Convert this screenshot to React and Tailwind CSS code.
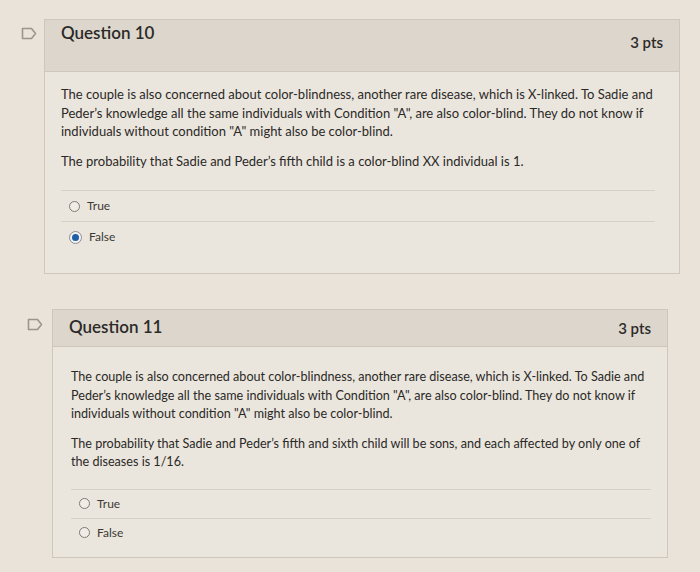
import React from 'react';

function Flag() {
  return (
    <svg width="16" height="13" viewBox="0 0 16 13" className="shrink-0">
      <path
        d="M1.5 1.5 H10.5 L14.5 6.5 L10.5 11.5 H1.5 Z"
        fill="none"
        stroke="#9a968f"
        strokeWidth="1.6"
        strokeLinejoin="round"
      />
    </svg>
  );
}

function Radio({ checked }) {
  if (checked) {
    return (
      <span className="w-[13px] h-[13px] rounded-full border border-[#8a8f96] bg-[#f4f2ee] flex items-center justify-center shrink-0">
        <span className="w-[7px] h-[7px] rounded-full bg-[#1f5fa8]" />
      </span>
    );
  }
  return <span className="w-[11px] h-[11px] rounded-full border border-[#7d7a75] bg-[#f1ede6] shrink-0" />;
}

function Question({ title, paragraphs, answers, className, header, titleShift, ptsShift, flagPos, bodyPad, textSize, sepGap, rowH }) {
  return (
    <div className={className}>
      <div className="relative">
        <div className={`absolute ${flagPos}`}>
          <Flag />
        </div>
        <div className="border border-[#cdc7bd] bg-[#ebe6dd]">
          <div className={`${header} bg-[#dcd6cc] border-b border-[#cdc7bd] flex items-center justify-between px-[16px]`}>
            <span className={`text-[17px] font-semibold text-[#2b2a28] ${titleShift}`}>{title}</span>
            <span className={`text-[15px] font-semibold text-[#2b2a28] ${ptsShift}`}>3 pts</span>
          </div>
          <div className={bodyPad}>
            {paragraphs.map((p, i) => (
              <p key={i} className={`${textSize} text-[#2a2927] mb-[11px]`}>
                {p}
              </p>
            ))}
            <div className={sepGap}>
              {answers.map((a, i) => (
                <div key={i} className={`border-t border-[#d6d0c6] ${rowH} flex items-center gap-[7px] pl-[8px] text-[12px] text-[#3a3936]`}>
                  <Radio checked={a.checked} />
                  <span>{a.label}</span>
                </div>
              ))}
            </div>
          </div>
        </div>
      </div>
    </div>
  );
}

export default function App() {
  const intro =
    'The couple is also concerned about color-blindness, another rare disease, which is X-linked. To Sadie and Peder\u2019s knowledge all the same individuals with Condition "A", are also color-blind. They do not know if individuals without condition "A" might also be color-blind.';
  return (
    <div className="w-[700px] h-[572px] overflow-hidden bg-[#e9e3da] pt-[19px]" style={{ fontFamily: 'Lato, "Open Sans", sans-serif' }}>
      <Question
        title="Question 10"
        className="pl-[44px] pr-[20px]"
        header="h-[52px]"
        titleShift="-mt-[26px]"
        ptsShift="-mt-[6px]"
        flagPos="-left-[23px] top-[8px]"
        bodyPad="pt-[13px] pb-[21px] pl-[16px] pr-[24px]"
        textSize="text-[13px] leading-[18.5px]"
        sepGap="mt-[20px]"
        rowH="h-[31px]"
        paragraphs={[
          intro,
          'The probability that Sadie and Peder\u2019s fifth child is a color-blind XX individual is 1.',
        ]}
        answers={[
          { label: 'True', checked: false },
          { label: 'False', checked: true },
        ]}
      />
      <div className="h-[35px]" />
      <Question
        title="Question 11"
        className="pl-[52px] pr-[32px]"
        header="h-[37px]"
        titleShift="-mt-[3px]"
        ptsShift="mt-[1px]"
        flagPos="-left-[25px] top-[9px]"
        bodyPad="pt-[21px] pb-[10px] pl-[18px] pr-[16px]"
        textSize="text-[12.6px] leading-[18.5px]"
        sepGap="mt-[17px]"
        rowH="h-[29px]"
        paragraphs={[
          intro,
          'The probability that Sadie and Peder\u2019s fifth and sixth child will be sons, and each affected by only one of the diseases is 1/16.',
        ]}
        answers={[
          { label: 'True', checked: false },
          { label: 'False', checked: false },
        ]}
      />
    </div>
  );
}
